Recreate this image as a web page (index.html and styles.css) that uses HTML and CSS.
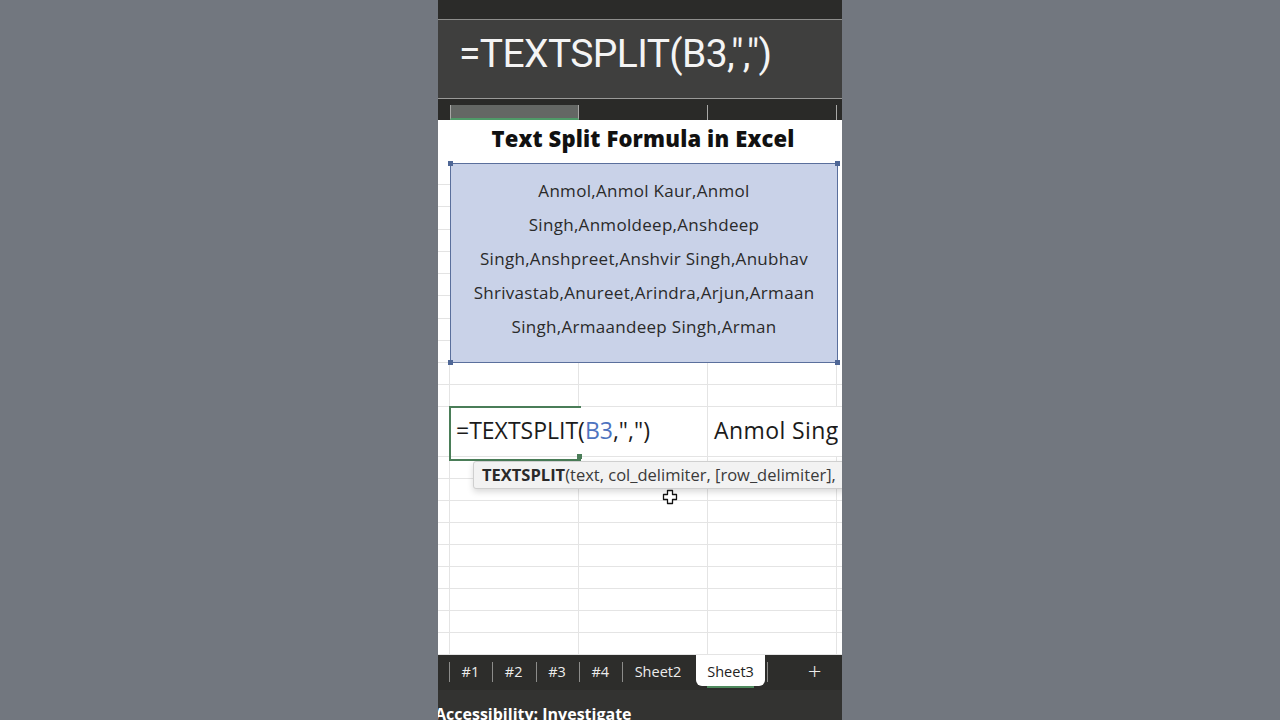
FILE: index.html
```html
<!DOCTYPE html>
<html lang="en">
<head>
<meta charset="utf-8">
<title>Text Split Formula in Excel</title>
<link rel="stylesheet" href="styles.css">
</head>
<body>
<main class="phone">
  <div class="topbar"></div>
  <div class="formula-bar"><span class="fx">=TEXTSPLIT(B3,",")</span></div>
  <div class="col-header">
    <div class="ch-gap"></div>
    <div class="ch ch-sel"></div>
    <div class="ch"></div>
    <div class="ch"></div>
    <div class="ch-rest"></div>
  </div>

  <section class="sheet">
    <div class="title-row">Text Split Formula in Excel</div>

    <div class="box-row">
      <div class="strip">
        <i></i><i></i><i></i><i></i><i></i><i></i><i></i><i></i><i></i>
      </div>
      <div class="box">
        <p>Anmol,Anmol Kaur,Anmol</p>
        <p>Singh,Anmoldeep,Anshdeep</p>
        <p>Singh,Anshpreet,Anshvir Singh,Anubhav</p>
        <p>Shrivastab,Anureet,Arindra,Arjun,Armaan</p>
        <p>Singh,Armaandeep Singh,Arman</p>
        <b class="handle h-tl"></b><b class="handle h-tr"></b><b class="handle h-bl"></b><b class="handle h-br"></b>
      </div>
      <div class="box-rest"></div>
    </div>

    <div class="row"><div class="c0"></div><div class="c"></div><div class="c"></div><div class="c"></div><div class="c4"></div></div>
    <div class="row"><div class="c0"></div><div class="c"></div><div class="c"></div><div class="c"></div><div class="c4"></div></div>

    <div class="row frow">
      <div class="c0"></div>
      <div class="fcell">=TEXTSPLIT(<span class="ref">B3</span>,",")</div>
      <div class="c ccell">Anmol Singh</div>
      <div class="c4"></div>
    </div>

    <div class="row"><div class="c0"></div><div class="c"></div><div class="c"></div><div class="c"></div><div class="c4"></div></div>
    <div class="row"><div class="c0"></div><div class="c"></div><div class="c"></div><div class="c"></div><div class="c4"></div></div>
    <div class="row"><div class="c0"></div><div class="c"></div><div class="c"></div><div class="c"></div><div class="c4"></div></div>
    <div class="row"><div class="c0"></div><div class="c"></div><div class="c"></div><div class="c"></div><div class="c4"></div></div>
    <div class="row"><div class="c0"></div><div class="c"></div><div class="c"></div><div class="c"></div><div class="c4"></div></div>
    <div class="row"><div class="c0"></div><div class="c"></div><div class="c"></div><div class="c"></div><div class="c4"></div></div>
    <div class="row"><div class="c0"></div><div class="c"></div><div class="c"></div><div class="c"></div><div class="c4"></div></div>
    <div class="row"><div class="c0"></div><div class="c"></div><div class="c"></div><div class="c"></div><div class="c4"></div></div>
    <div class="row"><div class="c0"></div><div class="c"></div><div class="c"></div><div class="c"></div><div class="c4"></div></div>

    <div class="tooltip"><b>TEXTSPLIT</b>(text, col_delimiter, [row_delimiter],</div>
    <svg class="cursor" width="16" height="16" viewBox="0 0 16 16" aria-hidden="true">
      <path d="M5.5 1.5h5v4h4v5h-4v4h-5v-4h-4v-5h4z" fill="#fff" stroke="#111" stroke-width="1.3" stroke-linejoin="round"/>
    </svg>
  </section>

  <nav class="tabs">
    <span class="tab">#1</span>
    <span class="tab">#2</span>
    <span class="tab">#3</span>
    <span class="tab">#4</span>
    <span class="tab">Sheet2</span>
    <span class="tab active"><span class="tab-label">Sheet3</span></span>
    <span class="tab-sep"></span>
    <span class="plus">+</span>
  </nav>
  <div class="status">Accessibility: Investigate</div>
</main>
</body>
</html>
```

FILE: styles.css
```css
* { box-sizing: border-box; }

html, body {
  margin: 0;
  padding: 0;
}

body {
  background: #72777f;
  display: flex;
  justify-content: center;
  height: 720px;
  overflow: hidden;
  font-family: "Open Sans", "Noto Sans", sans-serif;
}

.phone {
  width: 404px;
  height: 720px;
  overflow: hidden;
  display: flex;
  flex-direction: column;
  background: #2c2c2a;
}

.topbar {
  height: 20px;
  background: #2b2b29;
  border-bottom: 1px solid #8e8e8c;
  flex: none;
}

.formula-bar {
  height: 79px;
  flex: none;
  background: #3f3f3e;
  border-bottom: 1px solid #9a9a98;
  padding: 8px 0 0 21px;
}

.fx {
  color: #f4f4f4;
  font-family: Roboto, "Liberation Sans", sans-serif;
  font-size: 39px;
  line-height: 52px;
  letter-spacing: -0.6px;
  white-space: nowrap;
}

.col-header {
  height: 21px;
  flex: none;
  background: #2a2a28;
  display: flex;
  padding-top: 6px;
}

.ch-gap { width: 12px; }

.ch {
  width: 129px;
  border-right: 1px solid #a8a8a6;
}

.ch-sel {
  background: #646764;
  border-left: 1px solid #a8a8a6;
  border-bottom: 2px solid #4f9a68;
}

.ch-rest { flex: 1; }

.sheet {
  position: relative;
  height: 535px;
  flex: none;
  background: #fff;
  overflow: hidden;
}

.title-row {
  height: 43px;
  text-align: center;
  font-family: "Open Sans", sans-serif;
  font-weight: 800;
  font-size: 22px;
  line-height: 36px;
  color: #111;
  padding-left: 6px;
  letter-spacing: 0.15px;
}

.box-row {
  display: flex;
  height: 200px;
}

.strip {
  width: 12px;
  display: flex;
  flex-direction: column;
}

.strip i {
  flex: 1;
  border-bottom: 1px solid #e3e3e3;
}

.box {
  position: relative;
  width: 388px;
  background: #c9d2e8;
  border: 1px solid #5a6f9c;
  padding-top: 10px;
  text-align: center;
}

.box p {
  margin: 0;
  font-family: "Open Sans", sans-serif;
  font-size: 17px;
  line-height: 34px;
  letter-spacing: 0.3px;
  color: #2a2a2a;
  white-space: nowrap;
}

.box-rest { flex: 1; }

.handle {
  position: absolute;
  width: 5px;
  height: 5px;
  background: #4f6796;
}
.h-tl { left: -3px; top: -3px; }
.h-tr { right: -3px; top: -3px; }
.h-bl { left: -3px; bottom: -3px; }
.h-br { right: -3px; bottom: -3px; }

.row {
  display: flex;
  height: 22px;
  border-bottom: 1px solid #e4e4e4;
}

.c0 {
  width: 12px;
  border-right: 1px solid #e4e4e4;
  flex: none;
}

.c {
  width: 129px;
  flex: none;
  border-right: 1px solid #e4e4e4;
}

.c4 { flex: 1; }

.frow {
  height: 50px;
}

.fcell {
  position: relative;
  width: 258px;
  flex: none;
  border-right: 1px solid #e4e4e4;
  padding-left: 6px;
  font-family: "Open Sans", sans-serif;
  font-size: 23px;
  line-height: 46px;
  color: #1b1b1b;
  white-space: nowrap;
}

.fcell::before {
  content: "";
  position: absolute;
  left: -1px;
  top: -1px;
  width: 130px;
  height: 51px;
  border: 2px solid #4a7d58;
  border-right: 0;
}

.fcell::after {
  content: "";
  position: absolute;
  left: 127px;
  top: 47px;
  width: 5px;
  height: 5px;
  background: #4a7d58;
}

.ref { color: #4d73bf; }

.ccell {
  padding-left: 6px;
  font-family: "Open Sans", sans-serif;
  font-size: 23px;
  line-height: 46px;
  letter-spacing: 0.4px;
  color: #1b1b1b;
  white-space: nowrap;
  overflow: hidden;
  width: 130px;
  border-right: 0;
}

.tooltip {
  position: absolute;
  left: 35px;
  top: 341px;
  width: 380px;
  height: 28px;
  padding: 0 8px;
  background: #f2f2f2;
  border: 1px solid #cfcfcf;
  border-radius: 3px;
  box-shadow: 0 3px 6px rgba(0, 0, 0, 0.15);
  font-family: "Open Sans", sans-serif;
  font-size: 16.5px;
  line-height: 25px;
  color: #3a3a3a;
  white-space: nowrap;
}

.tooltip b {
  color: #2a2a2a;
  font-weight: 700;
}

.cursor {
  position: absolute;
  left: 224px;
  top: 369px;
}

.tabs {
  height: 35px;
  flex: none;
  background: #2d2d2b;
  display: flex;
  align-items: flex-start;
  padding-left: 11px;
  color: #ececec;
  font-family: "Open Sans", sans-serif;
  font-size: 14.5px;
}

.tab {
  position: relative;
  height: 31px;
  line-height: 33px;
  padding: 0 13px 0 12.6px;
}

.tab::after {
  content: "";
  position: absolute;
  left: 0;
  top: 7px;
  height: 20px;
  border-left: 1px solid #8c8c8a;
}

.tab.active::after { content: none; }

.tab.active {
  background: #fff;
  color: #222;
  border-radius: 0 0 6px 6px;
  margin-left: 2px;
  padding: 0 11px;
}

.tab-label {
  display: inline-block;
  line-height: 28px;
  border-bottom: 2px solid #4f8a5e;
}

.tab-sep {
  margin-left: 2px;
  margin-top: 7px;
  height: 20px;
  border-left: 1px solid #8c8c8a;
}

.plus {
  margin-left: 40px;
  font-size: 24px;
  line-height: 32px;
  font-weight: 300;
}

.status {
  flex: 1;
  background: #333331;
  color: #fff;
  font-family: "Open Sans", sans-serif;
  font-weight: 700;
  font-size: 16px;
  line-height: 20px;
  padding-top: 14px;
  margin-left: -3px;
  white-space: nowrap;
}
```
